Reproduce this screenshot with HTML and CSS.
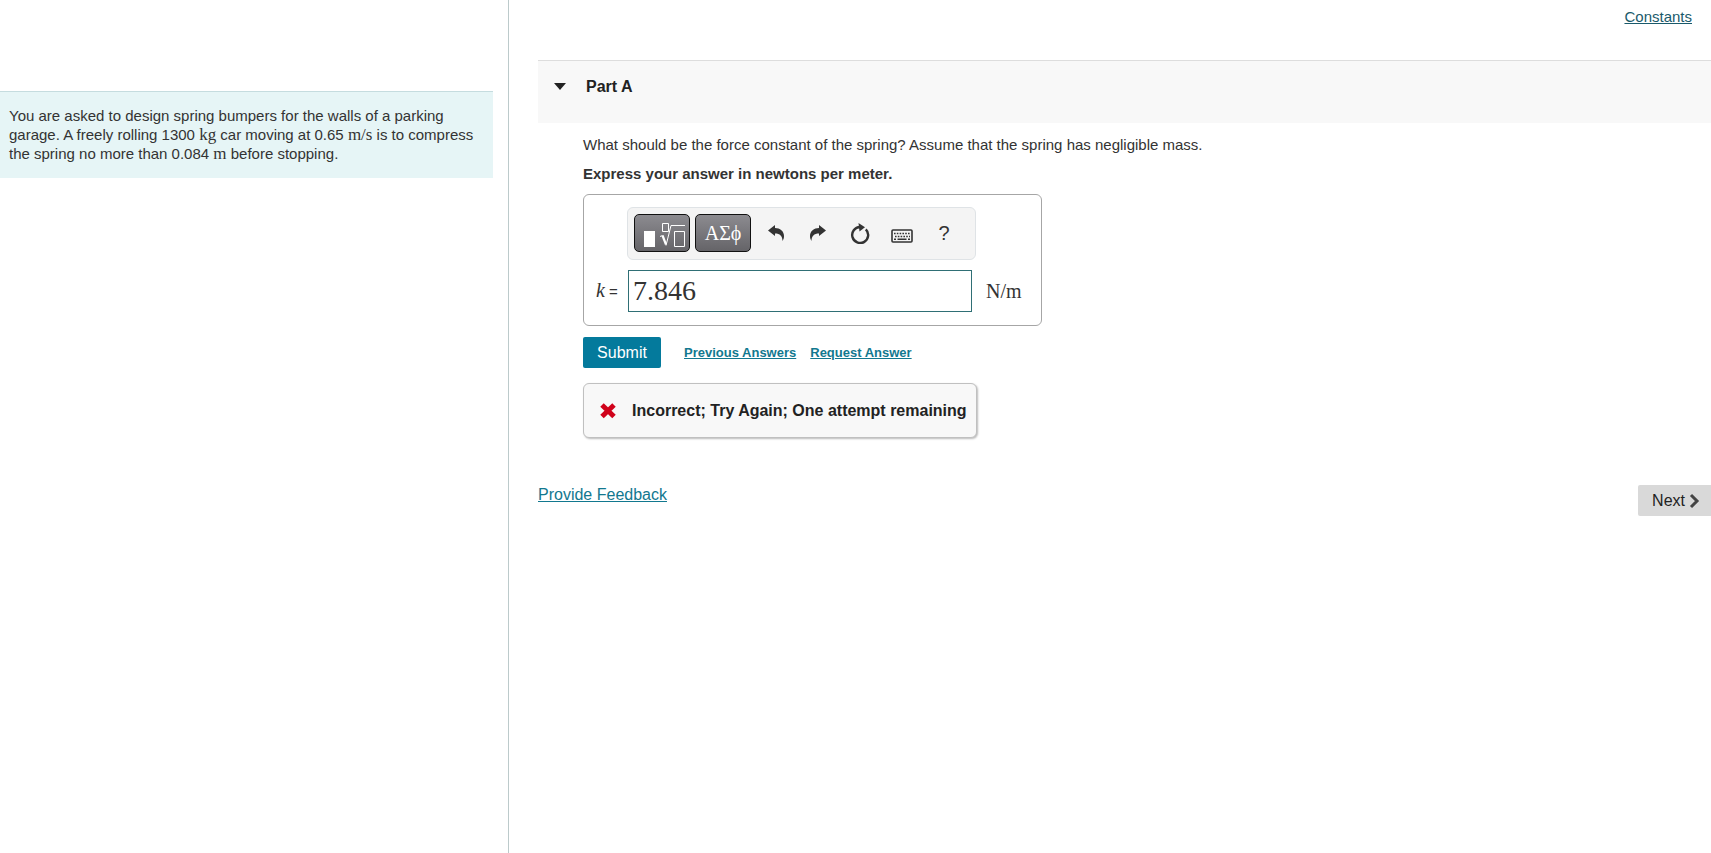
FILE: index.html
```html
<!DOCTYPE html>
<html lang="en">
<head>
  <meta charset="UTF-8" />
  <meta name="viewport" content="width=device-width, initial-scale=1.0"/>
  <title>Part A</title>
  <link rel="stylesheet" href="styles.css">
</head>
<body>

  <!-- Problem statement -->
  <aside class="problem">
    <p class="problem-text">You are asked to design spring bumpers for the walls of a parking garage. A freely rolling 1300 <span class="unit">kg</span> car moving at 0.65 <span class="unit">m/s</span> is to compress the spring no more than 0.084 <span class="unit">m</span> before stopping.</p>
  </aside>

  <main class="content">
    <div class="top-links">
      <a href="#">Constants</a>
    </div>

    <header class="part-header">
      <svg class="caret" viewBox="0 0 12 7" aria-hidden="true"><path d="M0 0h12L6 7z"/></svg>
      <h1>Part A</h1>
    </header>

    <form class="part-body" onsubmit="return false">
      <p class="question">What should be the force constant of the spring? Assume that the spring has negligible mass.</p>
      <p class="instruction">Express your answer in newtons per meter.</p>

      <!-- Answer box -->
      <div class="answer-box">
        <div class="toolbar">
          <button type="button" class="tool-dark" aria-label="Templates">
            <svg width="46" height="30" viewBox="0 0 46 30" fill="none" stroke="#fff" aria-hidden="true">
              <path d="M5 13h11v16H5z" fill="#fff" stroke="none"/>
              <path d="M23.500 5.500h6v8h-6z"/>
              <path d="M35.500 13.500h10v15h-10z"/>
              <path d="M21 18.500l2.500-1"/>
              <path d="M23.500 17.500l3.500 9" stroke-width="2.200"/>
              <path d="M27 27.500l5-20h14"/>
            </svg>
          </button>
          <button type="button" class="tool-dark greek" aria-label="Greek symbols">ΑΣϕ</button>
          <button type="button" class="tool" aria-label="Undo">
            <svg width="16" height="16" viewBox="0 0 16 16" aria-hidden="true"><path d="M0 5.500L7 0v3c5 0 9 3 9 8 0 2-.5 3.500-1.500 5C14.500 11 12 8.500 7 8.500V11z"/></svg>
          </button>
          <button type="button" class="tool" aria-label="Redo">
            <svg width="16" height="16" viewBox="0 0 16 16" aria-hidden="true"><path d="M16 5.500L9 0v3C4 3 0 6 0 11c0 2 .5 3.500 1.500 5C1.500 11 4 8.500 9 8.500V11z"/></svg>
          </button>
          <button type="button" class="tool" aria-label="Reset">
            <svg width="20" height="21" viewBox="0 0 20 21" aria-hidden="true">
              <path d="M15.800 6.300A8 8 0 1 1 10 4" fill="none" stroke="#333" stroke-width="2.400"/>
              <path d="M8.500 0l6.500 4.200-5.500 4.300z"/>
            </svg>
          </button>
          <button type="button" class="tool keyboard" aria-label="Keyboard shortcuts">
            <svg width="22" height="14" viewBox="0 0 22 14" aria-hidden="true">
              <rect x="1" y="1" width="20" height="12" rx="1" fill="none" stroke="#333" stroke-width="1.600"/>
              <path d="M3 4.500h16M4 7.500h15" fill="none" stroke="#333" stroke-width="1.600" stroke-dasharray="1.600 1.200"/>
              <path d="M3 9.500h2v1.500H3zM6.500 9.500h9v1.500h-9zM17 9.500h2v1.500h-2z"/>
            </svg>
          </button>
          <button type="button" class="tool help" aria-label="Help">?</button>
        </div>

        <div class="answer-row">
          <label for="answer"><i>k</i> =</label>
          <input type="text" id="answer" value="7.846">
          <span class="answer-unit">N/m</span>
        </div>
      </div>

      <div class="actions">
        <button type="submit" class="submit-btn">Submit</button>
        <a href="#">Previous Answers</a>
        <a href="#">Request Answer</a>
      </div>

      <!-- Result message -->
      <div class="result">
        <svg class="cross" width="18" height="18" viewBox="0 0 18 18" aria-hidden="true"><path d="M3 3l12 11.500M15 3L3 14.500"/></svg>
        <strong>Incorrect; Try Again; One attempt remaining</strong>
      </div>
    </form>

    <footer class="page-footer">
      <a href="#">Provide Feedback</a>
      <button type="button" class="next-btn">Next
        <svg width="11" height="16" viewBox="0 0 11 16" aria-hidden="true"><path d="M2 2l6 6-6 6"/></svg>
      </button>
    </footer>
  </main>

</body>
</html>
```
FILE: styles.css
```css
* { margin: 0; padding: 0; box-sizing: border-box; }

body {
  min-height: 100vh;
  display: flex;
  font-family: "Liberation Sans", Arial, sans-serif;
  font-size: 15px;
  line-height: 19px;
  color: #333;
  background: #fff;
}

a { color: #12788f; }
button { font-family: inherit; border: none; cursor: pointer; }

/* Left column */
.problem {
  width: 29.75%;
  flex-shrink: 0;
  padding: 91px 15px 0 0;
  border-right: 1px solid #bccacb;
}

.problem-text {
  padding: 14px 0 15px 9px;
  border-top: 1px solid #c5dcdf;
  background: #e6f5f6;
}

.unit, .answer-unit, .answer-row label i {
  font-family: "Liberation Serif", "Times New Roman", serif;
  line-height: 0;
}
.unit { font-size: 17px; }
.answer-unit, .answer-row label i { font-size: 20px; }

/* Right column */
.content { flex: 1; padding-left: 29px; }

.top-links {
  height: 60px;
  padding: 7px 19px;
  text-align: right;
}
.top-links a { color: #1a5a6b; }

.part-header {
  display: flex;
  gap: 20px;
  height: 63px;
  padding: 16px;
  border-top: 1px solid #ddd;
  background: #f8f8f8;
}
.part-header h1 { font-size: 16px; line-height: 19px; color: #222; }
.caret { width: 12px; height: 7px; margin-top: 6px; fill: #222; }

.part-body { padding: 12px 0 0 45px; }
.question { margin-bottom: 10px; }
.instruction { margin-bottom: 11px; font-weight: bold; }

.answer-box {
  width: 459px;
  max-width: 100%;
  padding: 12px 12px 13px;
  border: 1px solid #a6a6a6;
  border-radius: 6px;
}

.toolbar {
  display: flex;
  align-items: flex-start;
  width: 349px;
  height: 53px;
  margin: 0 0 10px 31px;
  padding: 6px;
  border: 1px solid #dfe3e6;
  border-radius: 6px;
  background: #f4f4f4;
}

.tool-dark {
  display: flex;
  align-items: center;
  justify-content: center;
  width: 56px;
  height: 38px;
  margin-right: 5px;
  border: 1px solid #111;
  border-radius: 5px;
  background: linear-gradient(#8c8b90, #656468);
  color: #fff;
}
.greek {
  margin-right: 4px;
  font-family: "Liberation Serif", "Times New Roman", serif;
  font-size: 20px;
}

.tool {
  display: flex;
  align-items: center;
  justify-content: center;
  width: 42px;
  height: 38px;
  background: none;
  fill: #333;
  color: #333;
}
.keyboard { padding-top: 6px; }
.help { font-size: 20px; }

.answer-row { display: flex; align-items: center; }
.answer-row label { width: 32px; }
.answer-row input {
  width: 344px;
  height: 42px;
  padding: 0 4px;
  border: 1px solid #2f6f75;
  font-family: "Liberation Serif", "Times New Roman", serif;
  font-size: 28px;
  color: #333;
  outline: none;
}
.answer-unit { margin-left: 14px; }

.actions {
  display: flex;
  align-items: center;
  gap: 14px;
  margin: 11px 0 15px;
}
.actions a { font-size: 13px; font-weight: bold; }

.submit-btn {
  width: 78px;
  height: 31px;
  margin-right: 9px;
  border-radius: 2px;
  background: #047a9c;
  font-size: 16px;
  color: #fff;
}

.result {
  display: inline-flex;
  align-items: center;
  gap: 15px;
  height: 55px;
  padding: 0 9px 0 15px;
  border: 1px solid #c0c0c0;
  border-radius: 6px;
  box-shadow: 1px 1px 2px #bbb;
  background: #f8f8f8;
  font-size: 16px;
  color: #222;
}
.cross { fill: none; stroke: #d0021b; stroke-width: 5; }

.page-footer {
  display: flex;
  justify-content: space-between;
  align-items: flex-start;
  margin-top: 47px;
  font-size: 16px;
}

.next-btn {
  display: flex;
  align-items: center;
  gap: 4px;
  height: 31px;
  padding: 0 11px 0 14px;
  border-radius: 2px 0 0 2px;
  background: #d9d9d9;
  font-size: 16px;
  color: #222;
}
.next-btn svg { fill: none; stroke: #444; stroke-width: 3; }
```
